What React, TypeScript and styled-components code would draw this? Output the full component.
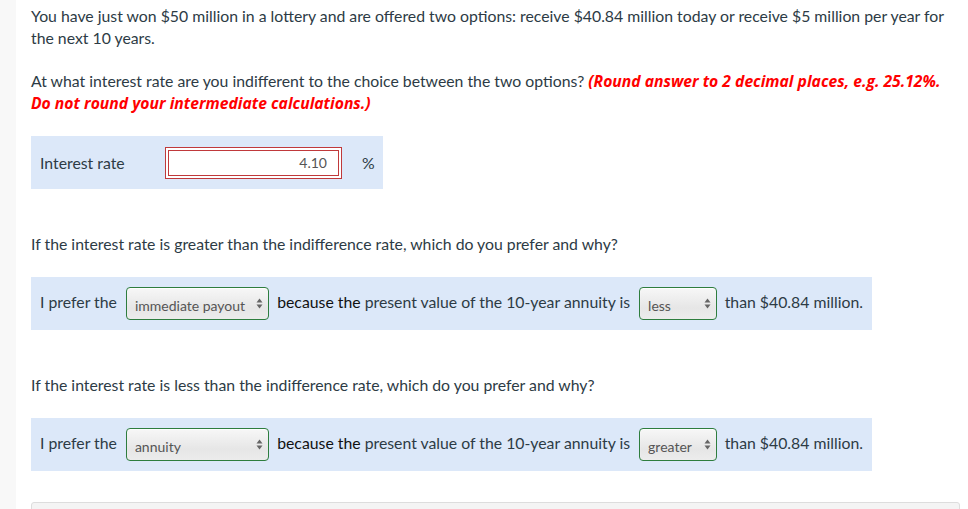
import React from 'react';
import styled, { createGlobalStyle } from 'styled-components';

const GlobalStyle = createGlobalStyle`
  html, body {
    margin: 0;
    padding: 0;
    background: #ffffff;
  }
  body {
    font-family: Lato, "Open Sans", sans-serif;
    font-size: 15.8px;
    line-height: 22px;
    color: #2d3b45;
  }
`;

const Page = styled.div`
  display: flex;
  min-height: 509px;
`;

const SideStrip = styled.div`
  width: 16px;
  flex: 0 0 16px;
  background: #f8f8f8;
`;

const Content = styled.main`
  flex: 1;
  padding: 5px 8px 0 15px;
  overflow: hidden;
  height: 509px;
  box-sizing: border-box;
`;

const Para = styled.p<{ $gap?: number }>`
  margin: 0 0 ${(p) => p.$gap ?? 21}px 0;
`;

const Hint = styled.strong`
  font-family: "Open Sans", sans-serif;
  font-size: 15.7px;
  line-height: 20px;
  color: #ff0000;
  font-style: italic;
  font-weight: 700;
`;

const AnswerBox = styled.div<{ $width: number; $gap: number; $lift?: number }>`
  width: ${(p) => p.$width}px;
  height: 53px;
  box-sizing: border-box;
  background: #dce8f9;
  display: flex;
  align-items: center;
  padding: 0 9px ${(p) => p.$lift ?? 0}px 9px;
  margin-bottom: ${(p) => p.$gap}px;
  white-space: nowrap;
`;

const Label = styled.span`
  width: 125px;
  flex: 0 0 125px;
`;

const RateInput = styled.input`
  width: 177px;
  height: 32px;
  box-sizing: border-box;
  border: 1px solid #c0393b;
  outline: 1px solid #c0393b;
  outline-offset: -4px;
  background: #ffffff;
  text-align: right;
  font-family: Lato, sans-serif;
  font-size: 14px;
  color: #555555;
  padding: 0 14px 0 6px;
`;

const Unit = styled.span`
  margin-left: 20px;
`;

const SelectWrap = styled.span<{ $width: number }>`
  position: relative;
  display: inline-block;
  width: ${(p) => p.$width}px;
  height: 33px;
  margin: 3px 8px 0 9px;
`;

const Select = styled.select`
  appearance: none;
  -webkit-appearance: none;
  width: 100%;
  height: 100%;
  box-sizing: border-box;
  border: 1px solid #2e7d3e;
  border-radius: 4px;
  background: linear-gradient(#f7f7f7, #e6e6e6 65%, #ececec);
  font-family: Lato, sans-serif;
  font-size: 14px;
  color: #555555;
  padding: 4px 20px 0 8px;
  box-shadow: inset 0 1px 1px rgba(255, 255, 255, 0.9);
`;

const Arrows = styled.svg`
  position: absolute;
  right: 6px;
  top: 11px;
  pointer-events: none;
`;

const Strong = styled.span`
  color: #111111;
`;

const Footer = styled.div`
  height: 20px;
  border: 1px solid #dddddd;
  border-radius: 3px 3px 0 0;
  background: #f4f4f4;
`;

const Dropdown: React.FC<{ width: number; value: string; options: string[] }> = ({
  width,
  value,
  options,
}) => (
  <SelectWrap $width={width}>
    <Select defaultValue={value}>
      {options.map((o) => (
        <option key={o} value={o}>
          {o}
        </option>
      ))}
    </Select>
    <Arrows width="7" height="11" viewBox="0 0 7 11">
      <path d="M3.5 0.5 L6.5 4.5 L0.5 4.5 Z" fill="#666" />
      <path d="M3.5 10.5 L6.5 6.5 L0.5 6.5 Z" fill="#666" />
    </Arrows>
  </SelectWrap>
);

const choices = ['immediate payout', 'annuity'];
const compare = ['less', 'greater'];

const PreferRow: React.FC<{ choice: string; cmp: string; gap: number }> = ({
  choice,
  cmp,
  gap,
}) => (
  <AnswerBox $width={841} $gap={gap} $lift={3}>
    I prefer the
    <Dropdown width={144} value={choice} options={choices} />
    <Strong>because the</Strong>&nbsp;present value of the 10-year annuity is
    <Dropdown width={78} value={cmp} options={compare} />
    than $40.84 million.
  </AnswerBox>
);

export default function App() {
  return (
    <Page>
      <GlobalStyle />
      <SideStrip />
      <Content>
        <Para>
          You have just won $50 million in a lottery and are offered two options: receive $40.84
          million today or receive $5 million per year for the next 10 years.
        </Para>
        <Para $gap={22}>
          At what interest rate are you indifferent to the choice between the two options?{' '}
          <Hint>(Round answer to 2 decimal places, e.g. 25.12%. Do not round your intermediate calculations.)</Hint>
        </Para>
        <AnswerBox $width={352} $gap={44}>
          <Label>Interest rate</Label>
          <RateInput defaultValue="4.10" />
          <Unit>%</Unit>
        </AnswerBox>
        <Para $gap={22}>
          If the interest rate is greater than the indifference rate, which do you prefer and why?
        </Para>
        <PreferRow choice="immediate payout" cmp="less" gap={44} />
        <Para $gap={22}>
          If the interest rate is less than the indifference rate, which do you prefer and why?
        </Para>
        <PreferRow choice="annuity" cmp="greater" gap={31} />
        <Footer />
      </Content>
    </Page>
  );
}
